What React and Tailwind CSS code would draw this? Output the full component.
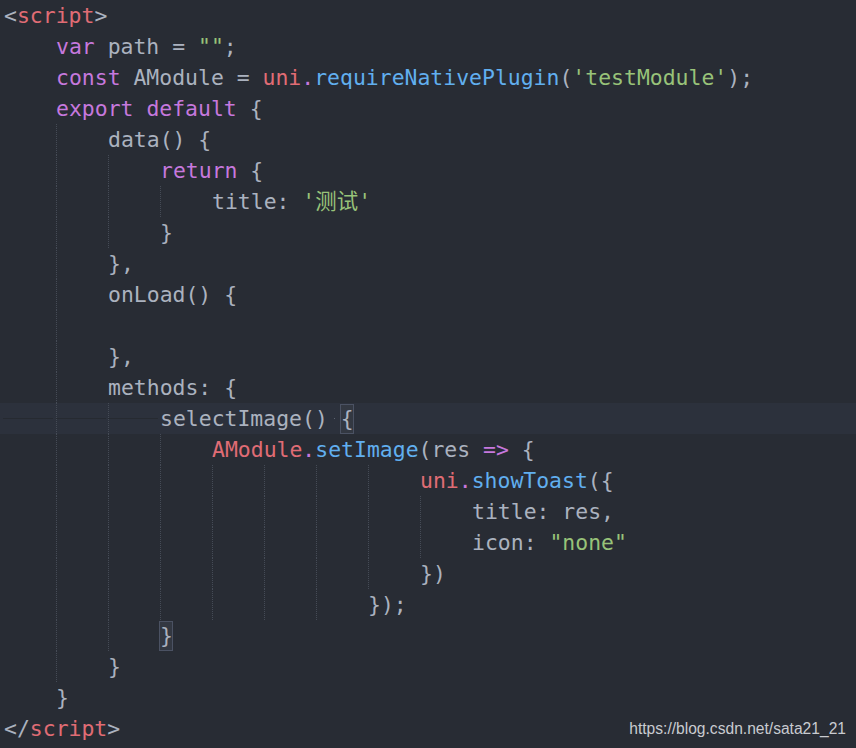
import React from 'react';

// One Dark palette
const C = {
  p: 'text-[#c678dd]',
  r: 'text-[#e06c75]',
  b: 'text-[#61afef]',
  g: 'text-[#98c379]',
  t: 'text-[#abb2bf]',
};

// [indent, tokens, options]
const lines = [
  [0, [['t', '<'], ['r', 'script'], ['t', '>']]],
  [1, [['p', 'var'], ['t', ' path = '], ['g', '""'], ['t', ';']]],
  [1, [['p', 'const'], ['t', ' AModule = '], ['r', 'uni'], ['p', '.'], ['b', 'requireNativePlugin'], ['t', '('], ['g', "'testModule'"], ['t', ');']]],
  [1, [['p', 'export'], ['t', ' '], ['p', 'default'], ['t', ' {']]],
  [2, [['t', 'data() {']]],
  [3, [['p', 'return'], ['t', ' {']]],
  [4, [['t', 'title: '], ['g', "'测试'"]]],
  [3, [['t', '}']]],
  [2, [['t', '},']]],
  [2, [['t', 'onLoad() {']]],
  [2, []],
  [2, [['t', '},']]],
  [2, [['t', 'methods: {']]],
  [3, [['t', 'selectImage()'], ['dot', ' '], ['box', '{']], { active: true }],
  [4, [['r', 'AModule'], ['p', '.'], ['b', 'setImage'], ['t', '(res '], ['p', '=>'], ['t', ' {']]],
  [8, [['r', 'uni'], ['p', '.'], ['b', 'showToast'], ['t', '({']]],
  [9, [['t', 'title: res,']]],
  [9, [['t', 'icon: '], ['g', '"none"']]],
  [8, [['t', '})']]],
  [7, [['t', '});']]],
  [3, [['box', '}']]],
  [2, [['t', '}']]],
  [1, [['t', '}']]],
  [0, [['t', '</'], ['r', 'script'], ['t', '>']]],
];

function Token({ kind, text }) {
  if (kind === 'box') {
    return (
      <span className="inline-block h-[30px] w-[14px] -ml-[1px] border border-[#4b5263] bg-[#333842] text-center leading-[28px] text-[#abb2bf]">
        {text}
      </span>
    );
  }
  if (kind === 'dot') {
    return (
      <span className="relative inline-block w-[13px] text-center">
        <span className="absolute left-[6px] top-[15px] h-[1px] w-[1px] bg-[#5c6370]" />
        &nbsp;
      </span>
    );
  }
  return <span className={`whitespace-pre ${C[kind]}`}>{text}</span>;
}

function Line({ indent, tokens, active }) {
  const units = Array.from({ length: indent });
  return (
    <div className={`flex h-[31px] items-stretch pl-[4px] ${active ? 'bg-[#2c313c]' : ''}`}>
      {units.map((_, i) => (
        <span
          key={i}
          className={`flex w-[52px] shrink-0 items-center ${i > 0 ? 'border-l border-dotted border-[#454b56]' : ''}`}
        >
          {active && <span className="mx-[-1px] h-[1px] w-[50px] bg-[#262a31]" />}
        </span>
      ))}
      <span className="flex items-center leading-[31px]">
        {tokens.map(([k, t], i) => (
          <Token key={i} kind={k} text={t} />
        ))}
      </span>
    </div>
  );
}

export default function App() {
  return (
    <div
      className="relative h-[748px] w-[856px] overflow-hidden bg-[#282c34] text-[21.45px]"
      style={{ fontFamily: '"DejaVu Sans Mono", "Noto Sans CJK SC", monospace' }}
    >
      <div className="flex flex-col">
        {lines.map(([indent, tokens, opts], i) => (
          <Line key={i} indent={indent} tokens={tokens} active={opts?.active} />
        ))}
      </div>
      <div className="absolute bottom-[8px] right-[10px] text-[15.6px] text-[#c9cbd0] font-['Liberation_Sans',sans-serif]">
        https://blog.csdn.net/sata21_21
      </div>
    </div>
  );
}
